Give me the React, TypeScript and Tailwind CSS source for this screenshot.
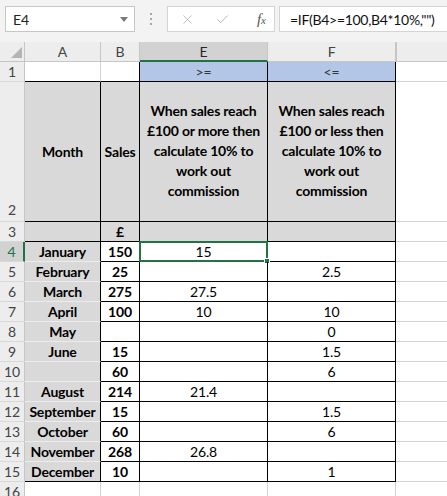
import { X, Check } from "lucide-react";

const font = { fontFamily: "Lato, 'Open Sans', sans-serif" };

type Row = { n: number; month: string; sales: string; e: string; f: string };

const dataRows: Row[] = [
   { n: 4, month: "January", sales: "150", e: "15", f: "" },
   { n: 5, month: "February", sales: "25", e: "", f: "2.5" },
   { n: 6, month: "March", sales: "275", e: "27.5", f: "" },
   { n: 7, month: "April", sales: "100", e: "10", f: "10" },
   { n: 8, month: "May", sales: "", e: "", f: "0" },
   { n: 9, month: "June", sales: "15", e: "", f: "1.5" },
   { n: 10, month: "", sales: "60", e: "", f: "6" },
   { n: 11, month: "August", sales: "214", e: "21.4", f: "" },
   { n: 12, month: "September", sales: "15", e: "", f: "1.5" },
   { n: 13, month: "October", sales: "60", e: "", f: "6" },
   { n: 14, month: "November", sales: "268", e: "26.8", f: "" },
   { n: 15, month: "December", sales: "10", e: "", f: "1" },
];

const RowHead = ({ n, selected = false, tall = false }: { n: number; selected?: boolean; tall?: boolean }) => (
   <div
      className={`flex justify-center border-b border-[#d8d8d8] text-[14px] ${
         tall ? "items-end pb-[1px]" : "items-center"
      } ${
         selected
            ? "bg-[#d2d2d2] text-[#217346] border-r-2 border-r-[#217346]"
            : "bg-[#ededed] text-[#444] border-r border-r-[#c6c6c6]"
      }`}
   >
      {n}
   </div>
);

const ColHead = ({ label, selected = false }: { label: string; selected?: boolean }) => (
   <div
      className={`flex items-center justify-center border-r border-[#c6c6c6] text-[14px] ${
         selected
            ? "bg-[#d2d2d2] text-[#262626] border-b-2 border-b-[#217346]"
            : "bg-[#ededed] text-[#444] border-b border-b-[#c6c6c6]"
      }`}
   >
      {label}
   </div>
);

const headerLinesE = ["When sales reach", "£100 or more then", "calculate 10% to", "work out", "commission"];
const headerLinesF = ["When sales reach", "£100 or less then", "calculate 10% to", "work out", "commission"];

export default function App() {
   return (
      <div className="w-[447px] h-[496px] overflow-hidden bg-white text-black" style={font}>
         {/* formula bar */}
         <div className="h-[42px] bg-[#f3f3f3] flex items-start pt-[6px] pl-[5px]">
            <div className="w-[130px] h-[26px] bg-white border border-[#c6c6c6] flex items-center justify-between pl-[7px] pr-[6px] text-[14px] text-[#222]">
               <span>E4</span>
               <svg width="8" height="5" viewBox="0 0 8 5">
                  <path d="M0 0 L8 0 L4 5 Z" fill="#7a7a7a" />
               </svg>
            </div>
            <div className="w-[32px] h-[26px] flex flex-col items-center justify-center gap-[3px]">
               <span className="w-[2px] h-[2px] bg-[#a6a6a6]" />
               <span className="w-[2px] h-[2px] bg-[#a6a6a6]" />
               <span className="w-[2px] h-[2px] bg-[#a6a6a6]" />
            </div>
            <div className="w-[108px] h-[26px] bg-white border border-[#d4d4d4] flex items-center pl-[12px] pr-[8px] justify-between">
               <X size={15} strokeWidth={1.4} color="#b8b8b8" />
               <Check size={15} strokeWidth={1.6} color="#b8b8b8" className="mr-[6px]" />
               <span className="text-[#555] italic text-[15px]" style={{ fontFamily: "'Liberation Serif', serif" }}>
                  f<span className="text-[11px]">x</span>
               </span>
            </div>
            <div className="ml-[4px] flex-1 -mr-[4px] h-[26px] bg-white border border-[#d4d4d4] flex items-center pl-[10px] text-[14px] tracking-[-0.3px] text-[#111] whitespace-nowrap">
               =IF(B4&gt;=100,B4*10%,"")
            </div>
         </div>

         {/* sheet */}
         <div className="grid grid-cols-[25px_76px_39px_128px_128px_1fr] grid-rows-[20px_20px_140px_repeat(13,20px)_20px] text-[14px] tracking-[-0.2px]">
            {/* column headers */}
            <div className="bg-[#ededed] border-r border-b border-[#c6c6c6] relative">
               <svg className="absolute right-[2px] bottom-[3px]" width="11" height="11" viewBox="0 0 11 11">
                  <path d="M11 0 L11 11 L0 11 Z" fill="#b4b4b4" />
               </svg>
            </div>
            <ColHead label="A" />
            <ColHead label="B" />
            <ColHead label="E" selected />
            <ColHead label="F" />
            <div className="bg-[#ededed] border-b border-[#c6c6c6] border-l border-l-[#c6c6c6]" />

            {/* row 1 */}
            <RowHead n={1} />
            <div className="border-r border-r-[#d4d4d4] border-b border-b-black" />
            <div className="border-r border-r-black border-b border-b-black" />
            <div className="bg-[#b4c6e7] border-r border-b border-black flex items-center justify-center text-[#333]">&gt;=</div>
            <div className="bg-[#b4c6e7] border-r border-b border-black flex items-center justify-center text-[#333]">&lt;=</div>
            <div className="border-b border-[#d4d4d4]" />

            {/* row 2 */}
            <RowHead n={2} tall />
            <div className="bg-[#d9d9d9] border-r border-b border-black flex items-center justify-center font-bold">Month</div>
            <div className="bg-[#d9d9d9] border-r border-b border-black flex items-center justify-center font-bold">Sales</div>
            <div className="bg-[#d9d9d9] border-r border-b border-black flex flex-col items-center justify-center font-bold leading-[20px] pb-[2px]">
               {headerLinesE.map((l) => (
                  <span key={l} className="whitespace-nowrap">{l}</span>
               ))}
            </div>
            <div className="bg-[#d9d9d9] border-r border-b border-black flex flex-col items-center justify-center font-bold leading-[20px] pb-[2px]">
               {headerLinesF.map((l) => (
                  <span key={l} className="whitespace-nowrap">{l}</span>
               ))}
            </div>
            <div className="border-b border-[#d4d4d4]" />

            {/* row 3 */}
            <RowHead n={3} />
            <div className="bg-[#d9d9d9] border-r border-b border-black" />
            <div className="bg-[#d9d9d9] border-r border-b border-black flex items-center justify-center font-bold">£</div>
            <div className="bg-[#d9d9d9] border-r border-b border-black" />
            <div className="bg-[#d9d9d9] border-r border-b border-black" />
            <div className="border-b border-[#d4d4d4]" />

            {dataRows.map((r) => {
               const last = r.n === 15;
               return [
                  <RowHead key={`h${r.n}`} n={r.n} selected={r.n === 4} />,
                  <div
                     key={`a${r.n}`}
                     className={`bg-[#d9d9d9] border-r border-r-black border-b flex items-center justify-center font-bold ${
                        last ? "border-b-black" : "border-b-[#ececec]"
                     }`}
                  >
                     {r.month}
                  </div>,
                  <div key={`b${r.n}`} className="border-r border-b border-black flex items-center justify-center font-bold">
                     {r.sales}
                  </div>,
                  <div key={`e${r.n}`} className="relative border-r border-b border-black flex items-center justify-center">
                     {r.e}
                     {r.n === 4 && (
                        <div className="absolute -left-[1px] -top-[1px] -right-[1px] -bottom-[1px] border-2 border-[#217346]">
                           <div className="absolute -right-[4px] -bottom-[4px] w-[6px] h-[6px] bg-[#217346] border border-white" />
                        </div>
                     )}
                  </div>,
                  <div key={`f${r.n}`} className="border-r border-b border-black flex items-center justify-center">
                     {r.f}
                  </div>,
                  <div key={`g${r.n}`} className="border-b border-[#d4d4d4]" />,
               ];
            })}

            {/* row 16 */}
            <RowHead n={16} />
            <div className="border-r border-[#d4d4d4]" />
            <div className="border-r border-[#d4d4d4]" />
            <div className="border-r border-[#d4d4d4]" />
            <div className="border-r border-[#d4d4d4]" />
            <div />
         </div>
      </div>
   );
}
